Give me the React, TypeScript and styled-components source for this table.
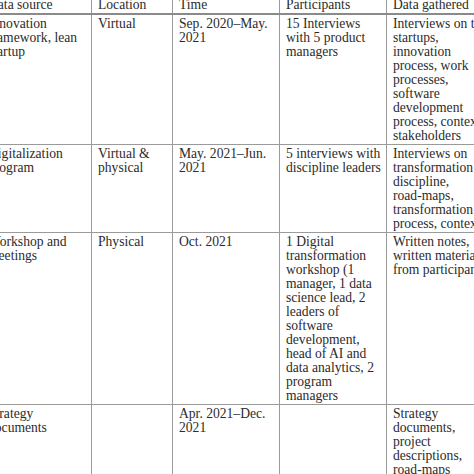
import styled, { createGlobalStyle } from 'styled-components';

const GlobalStyle = createGlobalStyle`
  html, body {
    margin: 0;
    padding: 0;
    background: #fff;
  }
`;

const Viewport = styled.div`
  width: 474px;
  height: 474px;
  overflow: hidden;
  background: #fff;
`;

const Table = styled.table`
  margin-top: -5px;
  margin-left: -19px;
  border-collapse: collapse;
  table-layout: fixed;
  width: 543px;
  font-family: 'Liberation Serif', 'Times New Roman', serif;
  font-size: 13.6px;
  line-height: 14px;
  color: #2b2b2b;
`;

const HeadCell = styled.th`
  text-align: left;
  font-weight: normal;
  vertical-align: top;
  padding: 3px 6px 1px 6px;
  border-bottom: 2px solid #8a8a8a;
  border-left: 1px solid #9a9a9a;
  white-space: nowrap;
  overflow: hidden;
`;

const Cell = styled.td`
  vertical-align: top;
  padding: 2px 6px 1px 6px;
  border-bottom: 1px solid #9a9a9a;
  border-left: 1px solid #9a9a9a;
  overflow: hidden;
`;

const Line = styled.span`
  display: block;
  white-space: nowrap;
`;

const columns = [
  { label: 'Data source', width: 110 },
  { label: 'Location', width: 81 },
  { label: 'Time', width: 107 },
  { label: 'Participants', width: 107 },
  { label: 'Data gathered', width: 138 },
];

const rows: string[][][] = [
  [
    ['Innovation', 'framework, lean', 'startup'],
    ['Virtual'],
    ['Sep. 2020–May.', '2021'],
    ['15 Interviews', 'with 5 product', 'managers'],
    [
      'Interviews on the',
      'startups,',
      'innovation',
      'process, work',
      'processes,',
      'software',
      'development',
      'process, context,',
      'stakeholders',
    ],
  ],
  [
    ['Digitalization', 'program'],
    ['Virtual &', 'physical'],
    ['May. 2021–Jun.', '2021'],
    ['5 interviews with', 'discipline leaders'],
    [
      'Interviews on',
      'transformation',
      'discipline,',
      'road-maps,',
      'transformation',
      'process, context',
    ],
  ],
  [
    ['Workshop and', 'meetings'],
    ['Physical'],
    ['Oct. 2021'],
    [
      '1 Digital',
      'transformation',
      'workshop (1',
      'manager, 1 data',
      'science lead, 2',
      'leaders of',
      'software',
      'development,',
      'head of AI and',
      'data analytics, 2',
      'program',
      'managers',
    ],
    ['Written notes,', 'written material', 'from participants'],
  ],
  [
    ['Strategy', 'documents'],
    [],
    ['Apr. 2021–Dec.', '2021'],
    [],
    ['Strategy', 'documents,', 'project', 'descriptions,', 'road-maps'],
  ],
];

export default function App() {
  return (
    <Viewport>
      <GlobalStyle />
      <Table>
        <colgroup>
          {columns.map((c) => (
            <col key={c.label} style={{ width: c.width }} />
          ))}
        </colgroup>
        <thead>
          <tr>
            {columns.map((c) => (
              <HeadCell key={c.label}>{c.label}</HeadCell>
            ))}
          </tr>
        </thead>
        <tbody>
          {rows.map((row, i) => (
            <tr key={i}>
              {row.map((lines, j) => (
                <Cell key={j}>
                  {lines.map((l) => (
                    <Line key={l}>{l}</Line>
                  ))}
                </Cell>
              ))}
            </tr>
          ))}
        </tbody>
      </Table>
    </Viewport>
  );
}
